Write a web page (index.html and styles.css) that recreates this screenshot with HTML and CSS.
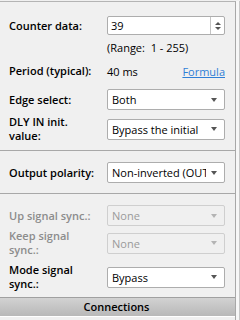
FILE: index.html
```html
<!DOCTYPE html>
<html>
<head>
<meta name="viewport" content="width=device-width, initial-scale=1">
<link rel="stylesheet" href="styles.css">
</head>
<body>

<div class="frame">
  <div class="panel">

    <div class="section first">
      <div class="row r-counter">
        <div class="label">Counter data:</div>
        <div class="spin">
          <span class="value">39</span>
          <span class="spin-btns">
            <span class="up"></span>
            <span class="down"></span>
          </span>
        </div>
      </div>
      <div class="row r-range">
        <div class="label"></div>
        <div class="note">(Range:&nbsp; 1 - 255)</div>
      </div>
      <div class="row r-period">
        <div class="label">Period (typical):</div>
        <div class="period">
          <span>40 ms</span>
          <a class="link" href="#">Formula</a>
        </div>
      </div>
      <div class="row r-edge">
        <div class="label">Edge select:</div>
        <div class="combo"><span class="text">Both</span><span class="arrow"></span></div>
      </div>
      <div class="row r-dly">
        <div class="label two">DLY IN init.<br>value:</div>
        <div class="combo"><span class="text">Bypass the initial</span><span class="arrow"></span></div>
      </div>
    </div>

    <div class="section second">
      <div class="row">
        <div class="label">Output polarity:</div>
        <div class="combo"><span class="text">Non-inverted (OUT)</span><span class="arrow"></span></div>
      </div>
    </div>

    <div class="section third">
      <div class="row r-up">
        <div class="label off">Up signal sync.:</div>
        <div class="combo disabled"><span class="text">None</span><span class="arrow"></span></div>
      </div>
      <div class="row r-keep">
        <div class="label two off">Keep signal<br>sync.:</div>
        <div class="combo disabled"><span class="text">None</span><span class="arrow"></span></div>
      </div>
      <div class="row r-mode">
        <div class="label two">Mode signal<br>sync.:</div>
        <div class="combo"><span class="text">Bypass</span><span class="arrow"></span></div>
      </div>
    </div>

    <div class="bar">Connections</div>
  </div>
  <div class="edge"></div>
</div>

</body>
</html>
```

FILE: styles.css
```css
body {
  margin: 0;
  background-color: #f0f0f0;
  font-family: "Open Sans", "Liberation Sans", sans-serif;
  font-size: 11px;
  color: #000;
}

.frame {
  display: flex;
  height: 320px;
  padding-top: 1px;
  box-sizing: border-box;
}

.panel {
  width: 235px;
  border-top: 1px solid #b4b4b4;
  border-right: 1px solid #a8a8a8;
  background-color: #f0f0f0;
}

.edge {
  flex: 1;
  background-color: #f7f7f7;
  border-right: 1px solid #c8c8c8;
}

.section {
  padding: 0 10px 0 9px;
  border-bottom: 1px solid #a8a8a8;
}

.section.first {
  padding-top: 14px;
  padding-bottom: 8px;
}

.section.second {
  padding-top: 11px;
  padding-bottom: 10px;
}

.section.third {
  padding-top: 11px;
  padding-bottom: 6px;
  border-bottom: none;
}

.row {
  display: flex;
  align-items: center;
}

.label {
  width: 98px;
  flex: none;
  font-weight: 600;
  line-height: 14px;
}

.label.off {
  color: #8c8c8c;
}

.r-range { margin-top: 5px; height: 14px; }
.r-period { margin-top: 10px; height: 14px; }
.r-edge { margin-top: 11px; }
.r-dly { margin-top: 6px; height: 26px; }
.r-keep { margin-top: 3px; height: 28px; }
.r-mode { margin-top: 6px; height: 28px; }

.note,
.period {
  width: 118px;
}

.period {
  display: flex;
  justify-content: space-between;
}

.link {
  color: #2f7fd6;
  text-decoration: underline;
}

.spin,
.combo {
  width: 118px;
  height: 21px;
  box-sizing: border-box;
  background-color: #fff;
  border: 1px solid #adadad;
  border-radius: 2px;
  display: flex;
  align-items: center;
}

.spin {
  height: 19px;
}

.value {
  flex: 1;
  padding-left: 3px;
}

.spin-btns {
  width: 13px;
  height: 100%;
  border-left: 1px solid #c4c4c4;
  display: flex;
  flex-direction: column;
  align-items: center;
  justify-content: center;
  gap: 2px;
}

.up {
  border-left: 3px solid transparent;
  border-right: 3px solid transparent;
  border-bottom: 3px solid #555;
}

.down {
  border-left: 3px solid transparent;
  border-right: 3px solid transparent;
  border-top: 3px solid #555;
}

.combo .text {
  flex: 1;
  padding-left: 4px;
  white-space: nowrap;
  overflow: hidden;
}

.combo .arrow {
  flex: none;
  margin: 0 7px 0 5px;
  border-left: 3.5px solid transparent;
  border-right: 3.5px solid transparent;
  border-top: 4px solid #555;
}

.combo.disabled {
  background-color: #f0f0f0;
  border-color: #cfcfcf;
  color: #9a9a9a;
}

.combo.disabled .arrow {
  border-top-color: #b4b4b4;
}

.bar {
  height: 18px;
  border-top: 1px solid #a0a0a0;
  border-bottom: 1px solid #fff;
  background: linear-gradient(#d2d2d2, #b8b8b8);
  text-align: center;
  font-weight: 600;
  line-height: 18px;
  padding-right: 2px;
}
```
